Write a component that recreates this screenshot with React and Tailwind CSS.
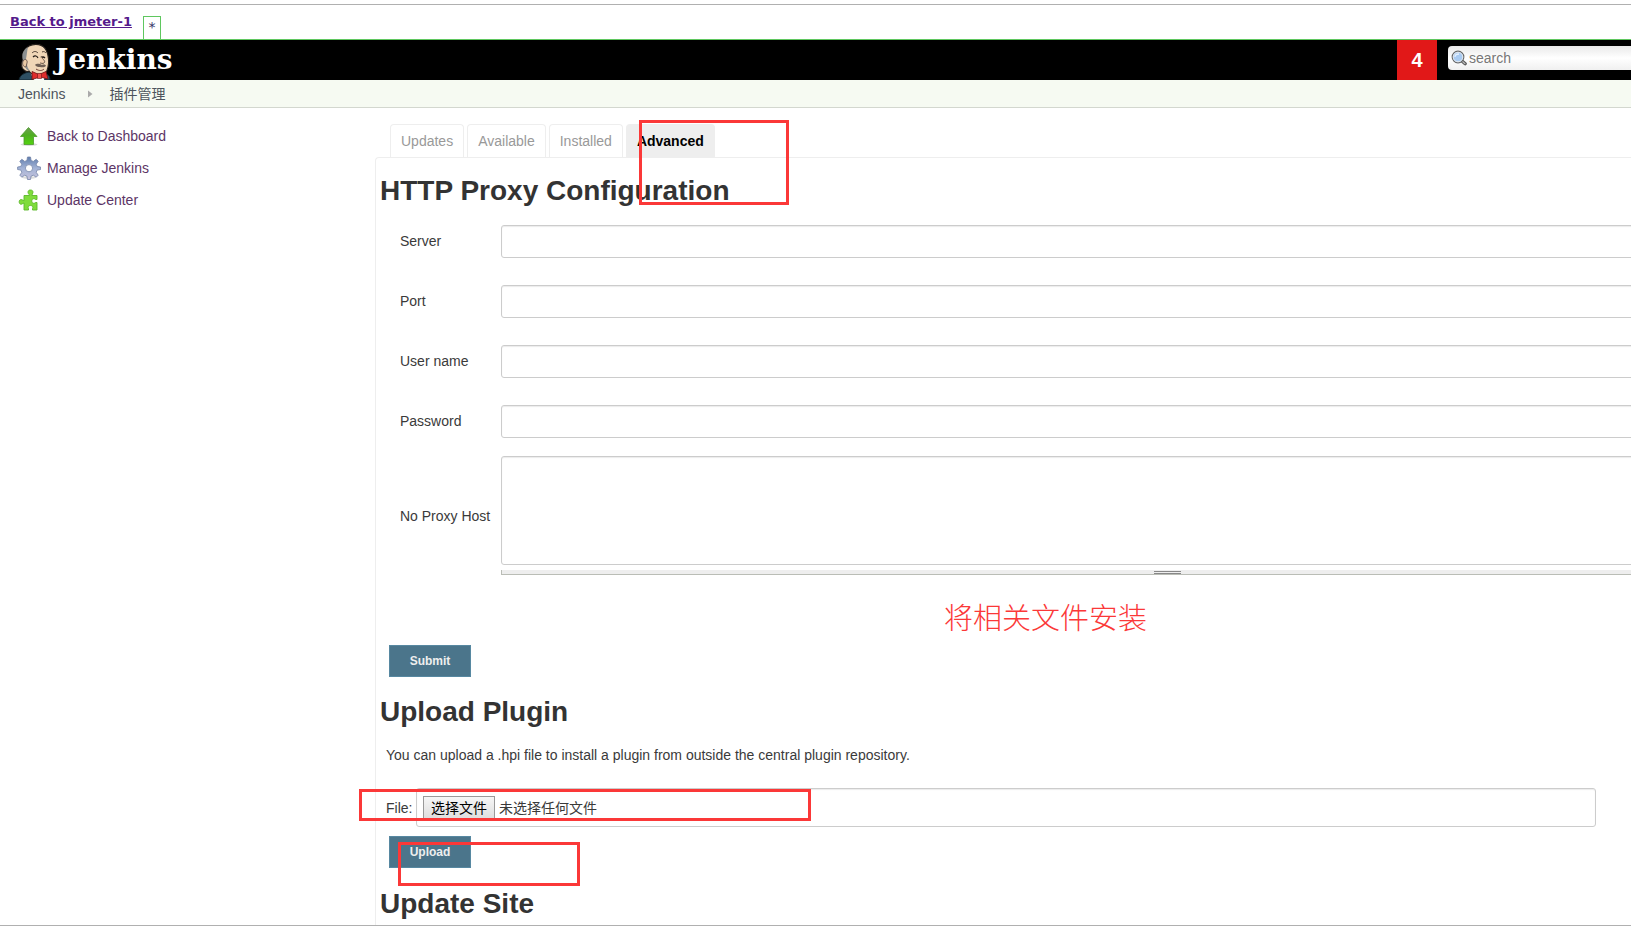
const fieldClass =
  'min-w-0 flex-1 rounded-[3px] border border-[#ccc] bg-white px-2 text-sm shadow-[inset_0_1px_1px_rgba(0,0,0,0.08)] outline-none';
const buttonClass =
  'block h-8 w-[82px] border border-[#5788a1] bg-[#4b758b] text-xs font-bold text-[#eee]';
const headingClass = 'pl-1 text-[28px] font-bold leading-8 text-[#333]';
const markClass = 'pointer-events-none absolute border-[3px] border-[#fb3838]';

function Butler() {
  return (
    <svg className="mt-[3px] h-[37px] w-[34px] shrink-0" viewBox="0 0 34 37" aria-hidden="true">
      <path d="M1 37C2 32 6 30 11 29L28 31C31 32 32 34 32 37Z" fill="#2e4f62" stroke="#122630" />
      <path d="M12 29L16 37H26L27 31Z" fill="#fff" />
      <path
        d="M6 27C3 25 3 20 5 17C3 12 6 6 11 3C17 0 25 1 28 7C31 12 31 20 30 24C29 29 26 33 22 33C17 33 13 31 11 28C9 29 7 28 6 27Z"
        fill="#f0d6b7"
        stroke="#26201c"
        strokeWidth="1.1"
      />
      <path d="M5 17C3 11 6 6 10 4C9 8 9 11 8 16L9 21C9 23 10 26 12 28C8 27 7 24 7 22C4 22 4 19 5 17Z" fill="#8b8f90" />
      <path d="M5 18C7 15 10 17 9 20L8 24C5 24 4 21 5 18Z" fill="#e9c9a5" stroke="#433" strokeWidth=".7" />
      <path d="M14 10C16 8 18 8 20 10M24 9C26 8 27 9 28 10" fill="none" stroke="#4b3b32" strokeWidth="1" />
      <path d="M15 14C17 12 19 13 20 15M23 15C25 13 26 14 27 15" fill="none" stroke="#241b17" strokeWidth="1.2" />
      <path d="M23 13C25 17 28 18 26 20C25 21 23 20 22 20" fill="#f2cfae" stroke="#4b3b32" strokeWidth=".8" />
      <path d="M17 22C19 20 22 21 24 22C26 21 28 22 28 23C26 25 23 24 22 24C20 24 19 24 17 22Z" fill="#6f5f55" />
      <path d="M18 26C21 28 24 28 26 26" fill="none" stroke="#713f35" strokeWidth="1" />
      <path d="M14 28.500L21 31.500L28 28.500L30 36L22 34L14 36.500Z" fill="#e02c2c" stroke="#6d1212" strokeWidth=".8" />
      <path d="M19.500 30.500H23.500V35.500H19.500Z" fill="#f0504c" stroke="#6d1212" strokeWidth=".6" />
    </svg>
  );
}

function UpArrow() {
  return (
    <svg className="h-6 w-6" viewBox="0 0 24 24" aria-hidden="true">
      <defs>
        <linearGradient id="arrow" x1="0" y1="0" x2="0" y2="1">
          <stop offset="0" stopColor="#6f9f55" />
          <stop offset=".45" stopColor="#4fae22" />
          <stop offset="1" stopColor="#52d210" />
        </linearGradient>
      </defs>
      <ellipse cx="12" cy="20.500" rx="8.500" ry="1.500" fill="#d9d9d9" />
      <path d="M11.500 3.500L20 12.500H16.500V20.500H7V12.500H3.500Z" fill="url(#arrow)" stroke="#4b9a2a" strokeWidth=".8" strokeLinejoin="round" />
    </svg>
  );
}

function Gear() {
  return (
    <svg className="h-6 w-6" viewBox="0 0 24 24" aria-hidden="true">
      <defs>
        <linearGradient id="gear" x1="0" y1="0" x2="0" y2="1">
          <stop offset="0" stopColor="#5f7dad" />
          <stop offset=".5" stopColor="#a3b3d6" />
          <stop offset="1" stopColor="#c6c3dd" />
        </linearGradient>
      </defs>
      <ellipse cx="12" cy="21.500" rx="7" ry="1.500" fill="#ddd" />
      <path
        fillRule="evenodd"
        fill="url(#gear)"
        stroke="#7484a8"
        strokeWidth=".8"
        strokeLinejoin="round"
        d="M10.500 1h3l.6 3.500 2.200.9L19.200 3.300l2 2-2 2.900.9 2.200 3.500.6v2.500l-3.500.6-.9 2.200 2 2.900-2 2-2.900-2-2.200.9-.6 3.400h-3l-.6-3.400-2.200-.9-2.900 2-2-2 2-2.900-.9-2.200-3.300-.6V11l3.300-.6.9-2.200-2-2.900 2-2 2.900 2.100 2.200-.9ZM12 8.600a3.600 3.600 0 1 0 0 7.200a3.600 3.600 0 0 0 0-7.200Z"
      />
    </svg>
  );
}

function Puzzle() {
  return (
    <svg className="h-6 w-6" viewBox="0 0 24 24" aria-hidden="true">
      <path
        d="M7 7.500H12.500C12.500 6.500 11 5.800 11 4.300C11 2.500 12.200 2 13.500 2C15 2 16 2.800 16 4.300C16 5.800 14.800 6.500 14.800 7.500H20V11.500H18.500C17.500 10.200 14.800 10.500 14.800 13C14.800 15.500 17.500 15.800 18.500 14.500H20V22H15.500V20.500C16.500 19 15.500 17.500 13.500 17.500C11.500 17.500 10.500 19 11.500 20.500V22H7V15C6 15 5.500 16.300 4.200 16.300C2.800 16.300 2.200 15.200 2.200 13.800C2.200 12.400 3 11.500 4.200 11.500C5.500 11.500 6 12.600 7 12.600Z"
        fill="#7fdc3c"
        stroke="#5cb82a"
        strokeWidth=".9"
        strokeLinejoin="round"
      />
    </svg>
  );
}

function Magnifier() {
  return (
    <svg className="h-4 w-4 shrink-0" viewBox="0 0 16 16" aria-hidden="true">
      <path d="M11 11L14.200 13.800" stroke="#555" strokeWidth="3.200" strokeLinecap="round" />
      <path d="M11.500 11.500L14 13.700" stroke="#bbb" strokeWidth="1.200" strokeLinecap="round" />
      <circle cx="7" cy="7" r="5.800" fill="#a9cbf2" stroke="#666" strokeWidth="1.200" />
      <circle cx="7" cy="7" r="4.800" fill="none" stroke="#e4e8ec" />
      <path d="M4 7C4 5 6 4 8 4" fill="none" stroke="#e3f0ff" strokeWidth="1.300" />
    </svg>
  );
}

const tasks = [
  { label: 'Back to Dashboard', Icon: UpArrow },
  { label: 'Manage Jenkins', Icon: Gear },
  { label: 'Update Center', Icon: Puzzle },
];

const fields = [
  { id: 'server', label: 'Server', type: 'text' },
  { id: 'port', label: 'Port', type: 'text' },
  { id: 'username', label: 'User name', type: 'text' },
  { id: 'password', label: 'Password', type: 'password' },
];

export default function App() {
  return (
    <div className="overflow-x-hidden bg-white pt-1 font-['Liberation_Sans','Noto_Sans_CJK_SC',sans-serif] text-sm text-[#3a3a3a]">
      <div className="flex h-9 items-end border-t border-b border-t-[#b0b0b0] border-b-[#5fc75f] pl-[10px]">
        <a href="#job" className="mb-[7px] font-['DejaVu_Sans',sans-serif] text-[13px] font-bold leading-5 text-[#551a8b] underline">
          Back to jmeter-1
        </a>
        <a
          href="#new"
          className="ml-[11px] flex h-[23px] w-[18px] justify-center border border-b-0 border-[#5fc75f] font-['DejaVu_Sans',sans-serif] text-sm leading-5 text-[#336]"
        >
          *
        </a>
      </div>

      <header className="flex h-10 items-center justify-between bg-black">
        <a href="#home" className="flex h-10 items-center pl-[18px] text-white">
          <Butler />
          <span className="pl-[3px] font-['DejaVu_Serif',serif] text-[28px] font-bold leading-8">Jenkins</span>
        </a>
        <div className="flex items-center">
          <a href="#notices" className="flex h-10 w-10 items-center justify-center bg-[#e11818] text-xl font-bold text-white">
            4
          </a>
          <label className="-mt-1 -mr-1 ml-[11px] flex h-6 w-[187px] items-center gap-[2px] rounded-[4px] bg-linear-to-b from-[#e9e9e9] via-white to-[#f0f0f0] pl-[3px]">
            <Magnifier />
            <input
              type="search"
              aria-label="search"
              placeholder="search"
              className="min-w-0 flex-1 bg-transparent text-sm outline-none placeholder:text-[#777]"
            />
          </label>
        </div>
      </header>

      <nav aria-label="Breadcrumb" className="flex h-7 items-center border-b border-[#d3d7cf] bg-[#f6faf2] pl-[18px] text-[#4d545d]">
        <a href="#home">Jenkins</a>
        <svg className="mr-4 ml-[23px] h-2 w-[5px]" viewBox="0 0 5 8" aria-hidden="true">
          <path d="M0 .5L4.500 4L0 7.500Z" fill="#aaa" />
        </svg>
        <a href="#plugins">插件管理</a>
      </nav>

      <div className="flex border-b border-[#b0b0b0]">
        <aside className="w-[375px] shrink-0 pt-3 pl-[17px]">
          {tasks.map(({ label, Icon }) => (
            <a key={label} href="#task" className="flex h-8 items-center gap-[6px] text-[#5c3566]">
              <Icon />
              {label}
            </a>
          ))}
        </aside>

        <main className="relative min-w-0 flex-1 pt-4">
          <div className="flex h-[33px] gap-[3px] pl-[15px] leading-8 text-[#999]">
            {['Updates', 'Available', 'Installed'].map((tab) => (
              <a key={tab} href="#tab" className="rounded-t-[4px] border border-b-0 border-[#eee] px-[10px]">
                {tab}
              </a>
            ))}
            <a href="#tab" aria-current="page" className="rounded-t-[4px] border border-b-0 border-[#eee] bg-[#eee] px-[10px] font-bold text-black">
              Advanced
            </a>
          </div>

          <div className="rounded-tl-[4px] border-t border-l border-[#eee] pt-[17px] pb-[5px]">
            <h1 className={headingClass}>HTTP Proxy Configuration</h1>
            <form onSubmit={(e) => e.preventDefault()}>
              <div className="-mr-[201px] mt-[18px] flex flex-col gap-[27px] pl-6">
                {fields.map(({ id, label, type }) => (
                  <div key={id} className="flex h-[33px] items-stretch">
                    <label htmlFor={id} className="w-[101px] shrink-0 leading-8">
                      {label}
                    </label>
                    <input id={id} type={type} className={fieldClass} />
                  </div>
                ))}
              </div>
              <div className="-mr-[201px] mt-[18px] flex items-center pl-6">
                <label htmlFor="noproxy" className="w-[101px] shrink-0">
                  No Proxy Host
                </label>
                <div className="flex flex-1 flex-col gap-[5px]">
                  <textarea id="noproxy" className={`${fieldClass} h-[109px] flex-none resize-none`} />
                  <div className="flex h-[5px] justify-center border-b border-l border-[#babdb6] bg-[#eee] pt-px">
                    <div className="h-[3px] w-[27px] border-t border-b border-[#888]" />
                  </div>
                </div>
              </div>
              <button type="submit" className={`${buttonClass} ml-[13px] mt-[70px]`}>
                Submit
              </button>
            </form>

            <h1 className={`${headingClass} mt-[19px]`}>Upload Plugin</h1>
            <form onSubmit={(e) => e.preventDefault()}>
              <p className="mt-[17px] pl-[10px] leading-5">
                You can upload a .hpi file to install a plugin from outside the central plugin repository.
              </p>
              <div className="mt-[23px] mr-[35px] flex h-[39px] items-center pl-[10px]">
                <label htmlFor="plugin" className="w-[30px] shrink-0">
                  File:
                </label>
                <label
                  htmlFor="plugin"
                  className="relative flex h-[39px] flex-1 items-center gap-1 rounded-[3px] border border-[#ccc] pl-[6px] shadow-[inset_0_1px_1px_rgba(0,0,0,0.08)]"
                >
                  <input id="plugin" type="file" className="sr-only" />
                  <span className="flex h-6 w-[72px] items-center justify-center border border-[#999] bg-linear-to-b from-[#f6f6f6] to-[#dedede] text-black">
                    选择文件
                  </span>
                  <span>未选择任何文件</span>
                </label>
              </div>
              <button type="submit" className={`${buttonClass} ml-[13px] mt-[9px]`}>
                Upload
              </button>
            </form>

            <h1 className={`${headingClass} mt-5`}>Update Site</h1>
          </div>

          <div className={`${markClass} left-[264px] top-3 h-[85px] w-[150px]`} />
          <div className={`${markClass} -left-4 top-[681px] h-8 w-[452px]`} />
          <div className={`${markClass} left-[23px] top-[734px] h-11 w-[182px]`} />
          <p className="absolute left-[569px] top-[488px] font-['Noto_Sans_CJK_SC',sans-serif] text-[29px] font-light leading-10 text-[#fb3838]">
            将相关文件安装
          </p>
        </main>
      </div>
    </div>
  );
}
